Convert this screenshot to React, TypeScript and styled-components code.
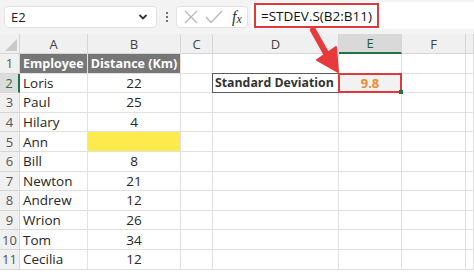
import React from 'react';
import styled, { createGlobalStyle } from 'styled-components';

const GlobalStyle = createGlobalStyle`
  html, body {
    margin: 0;
    padding: 0;
    background: #ffffff;
  }
  body {
    width: 474px;
    height: 274px;
    overflow: hidden;
    font-family: 'Open Sans', 'Noto Sans', sans-serif;
  }
`;

interface Row {
  name: string;
  distance: string;
  highlight?: boolean;
}

const rows: Row[] = [
  { name: 'Loris', distance: '22' },
  { name: 'Paul', distance: '25' },
  { name: 'Hilary', distance: '4' },
  { name: 'Ann', distance: '', highlight: true },
  { name: 'Bill', distance: '8' },
  { name: 'Newton', distance: '21' },
  { name: 'Andrew', distance: '12' },
  { name: 'Wrion', distance: '26' },
  { name: 'Tom', distance: '34' },
  { name: 'Cecilia', distance: '12' }
];

const columns = ['A', 'B', 'C', 'D', 'E', 'F', ''];

const App: React.FC = () => {
  return (
    <Page>
      <GlobalStyle />
      <Toolbar>
        <NameBox>
          <span>E2</span>
          <svg width="10" height="8" viewBox="0 0 10 8">
            <path d="M1.5 2 L5 5.5 L8.5 2" stroke="#333" strokeWidth="1.8" fill="none" />
          </svg>
        </NameBox>
        <Dots>
          <i />
          <i />
          <i />
        </Dots>
        <IconBox>
          <svg width="16" height="16" viewBox="0 0 16 16">
            <path d="M2 2 L14 14 M14 2 L2 14" stroke="#b8b8b8" strokeWidth="1.3" />
          </svg>
          <svg width="18" height="16" viewBox="0 0 18 16">
            <path d="M1 8 L6 13.5 L17 2" stroke="#b8b8b8" strokeWidth="1.3" fill="none" />
          </svg>
          <Fx>
            f<sub>x</sub>
          </Fx>
        </IconBox>
        <FormulaInput>
          <FormulaText>=STDEV.S(B2:B11)</FormulaText>
        </FormulaInput>
      </Toolbar>

      <Sheet>
        <Corner>
          <svg width="12" height="12" viewBox="0 0 12 12">
            <path d="M12 0 L12 12 L0 12 Z" fill="#c9c9c9" />
          </svg>
        </Corner>
        {columns.map((col, i) => (
          <ColHead key={i} active={col === 'E'}>
            {col}
          </ColHead>
        ))}

        <RowHead>1</RowHead>
        <Cell dark>Employee</Cell>
        <Cell dark center>
          Distance (Km)
        </Cell>
        <Cell />
        <Cell />
        <Cell />
        <Cell />
        <Cell />

        {rows.map((row, i) => (
          <React.Fragment key={row.name}>
            <RowHead active={i === 0}>{i + 2}</RowHead>
            <Cell>{row.name}</Cell>
            <Cell center yellow={row.highlight}>
              {row.distance}
            </Cell>
            <Cell />
            {i === 0 ? <LabelCell>Standard Deviation</LabelCell> : <Cell />}
            {i === 0 ? (
              <ResultCell>
                9.8
                <Handle />
              </ResultCell>
            ) : (
              <Cell />
            )}
            <Cell />
            <Cell />
          </React.Fragment>
        ))}
      </Sheet>

      <Arrow width="474" height="274" viewBox="0 0 474 274">
        <path d="M313 30 L327 55" stroke="#e8393b" strokeWidth="6" strokeLinecap="round" />
        <path d="M317 60 L336 47 L338 72 Z" fill="#e8393b" stroke="#e8393b" strokeWidth="2" strokeLinejoin="round" />
      </Arrow>
    </Page>
  );
};

export default App;

const Page = styled.div`
  position: relative;
  width: 474px;
  height: 274px;
  overflow: hidden;
  background: #ffffff;
`;

const Toolbar = styled.div`
  display: flex;
  align-items: center;
  height: 34px;
  padding-left: 4px;
  background: #f3f3f3;
  box-sizing: border-box;
`;

const NameBox = styled.div`
  display: flex;
  align-items: center;
  justify-content: space-between;
  width: 153px;
  height: 22px;
  box-sizing: border-box;
  padding: 0 8px 0 6px;
  background: #ffffff;
  border: 1px solid #e2e2e2;
  border-radius: 4px;
  font-size: 13px;
  color: #222;
`;

const Dots = styled.div`
  display: flex;
  flex-direction: column;
  gap: 2px;
  margin: 0 8px 0 9px;

  i {
    width: 2px;
    height: 2px;
    background: #444;
    border-radius: 50%;
  }
`;

const IconBox = styled.div`
  display: flex;
  align-items: center;
  gap: 6px;
  width: 72px;
  height: 22px;
  box-sizing: border-box;
  padding: 0 4px 0 6px;
  background: #ffffff;
  border: 1px solid #e2e2e2;
  border-radius: 4px;
`;

const Fx = styled.span`
  font-family: 'Liberation Serif', 'DejaVu Serif', serif;
  font-style: italic;
  font-size: 16px;
  color: #333;
  margin-left: 3px;

  sub {
    font-size: 12px;
    vertical-align: -1px;
  }
`;

const FormulaInput = styled.div`
  flex: 1;
  display: flex;
  align-items: center;
  height: 27px;
  margin-left: 3px;
  padding-left: 3px;
  background: #ffffff;
  border-radius: 4px 0 0 4px;
  align-self: flex-start;
  margin-top: 2px;
`;

const FormulaText = styled.div`
  display: flex;
  align-items: center;
  width: 125px;
  height: 25px;
  box-sizing: border-box;
  padding-left: 5px;
  border: 2px solid #e0393b;
  font-size: 13.5px;
  color: #111;
`;

const Sheet = styled.div`
  display: grid;
  grid-template-columns: 20px 68px 93px 32px 126px 63px 64px 8px;
  grid-template-rows: 20px repeat(11, 19.6px);
`;

const Corner = styled.div`
  display: flex;
  align-items: flex-end;
  justify-content: flex-end;
  padding: 0 2px 2px 0;
  background: #f0f0f0;
  border-right: 1px solid #d6d6d6;
  border-bottom: 1px solid #d6d6d6;
`;

const ColHead = styled.div<{ active?: boolean }>`
  display: flex;
  align-items: center;
  justify-content: center;
  box-sizing: border-box;
  background: ${(p) => (p.active ? '#d9d9d9' : '#f0f0f0')};
  border-right: 1px solid #d6d6d6;
  border-bottom: ${(p) => (p.active ? '2px solid #217346' : '1px solid #d6d6d6')};
  font-size: 13px;
  color: ${(p) => (p.active ? '#1f5f3a' : '#444')};
`;

const RowHead = styled.div<{ active?: boolean }>`
  display: flex;
  align-items: center;
  justify-content: center;
  box-sizing: border-box;
  background: ${(p) => (p.active ? '#dcdcdc' : '#f0f0f0')};
  border-right: ${(p) => (p.active ? '2px solid #217346' : '1px solid #d6d6d6')};
  border-bottom: 1px solid #d6d6d6;
  font-size: 13px;
  color: ${(p) => (p.active ? '#2f6e48' : '#555')};
`;

const Cell = styled.div<{ dark?: boolean; center?: boolean; yellow?: boolean }>`
  display: flex;
  align-items: center;
  justify-content: ${(p) => (p.center ? 'center' : 'flex-start')};
  box-sizing: border-box;
  padding-left: ${(p) => (p.center ? '0' : '3px')};
  white-space: nowrap;
  overflow: hidden;
  background: ${(p) => (p.dark ? '#767676' : p.yellow ? '#fdea4d' : '#ffffff')};
  border-right: 1px solid #e1e1e1;
  border-bottom: 1px solid #e1e1e1;
  font-size: ${(p) => (p.dark ? '12.5px' : '13.5px')};
  font-weight: ${(p) => (p.dark ? 700 : 400)};
  color: ${(p) => (p.dark ? '#ffffff' : '#262626')};
`;

const LabelCell = styled.div`
  display: flex;
  align-items: center;
  box-sizing: border-box;
  padding-left: 2px;
  border: 1.5px solid #5a5a5a;
  margin: -1px 0 0 -1px;
  font-size: 12.3px;
  font-weight: 700;
  color: #333;
  white-space: nowrap;
`;

const ResultCell = styled.div`
  position: relative;
  display: flex;
  align-items: center;
  justify-content: center;
  box-sizing: border-box;
  margin: -1px 0 0 -1px;
  background: #f2f2f2;
  border: 2px solid #e0393b;
  font-size: 13px;
  font-weight: 700;
  color: #ed8a32;
`;

const Handle = styled.span`
  position: absolute;
  right: -3px;
  bottom: -3px;
  width: 4px;
  height: 4px;
  background: #217346;
`;

const Arrow = styled.svg`
  position: absolute;
  left: 0;
  top: 0;
  pointer-events: none;
`;
